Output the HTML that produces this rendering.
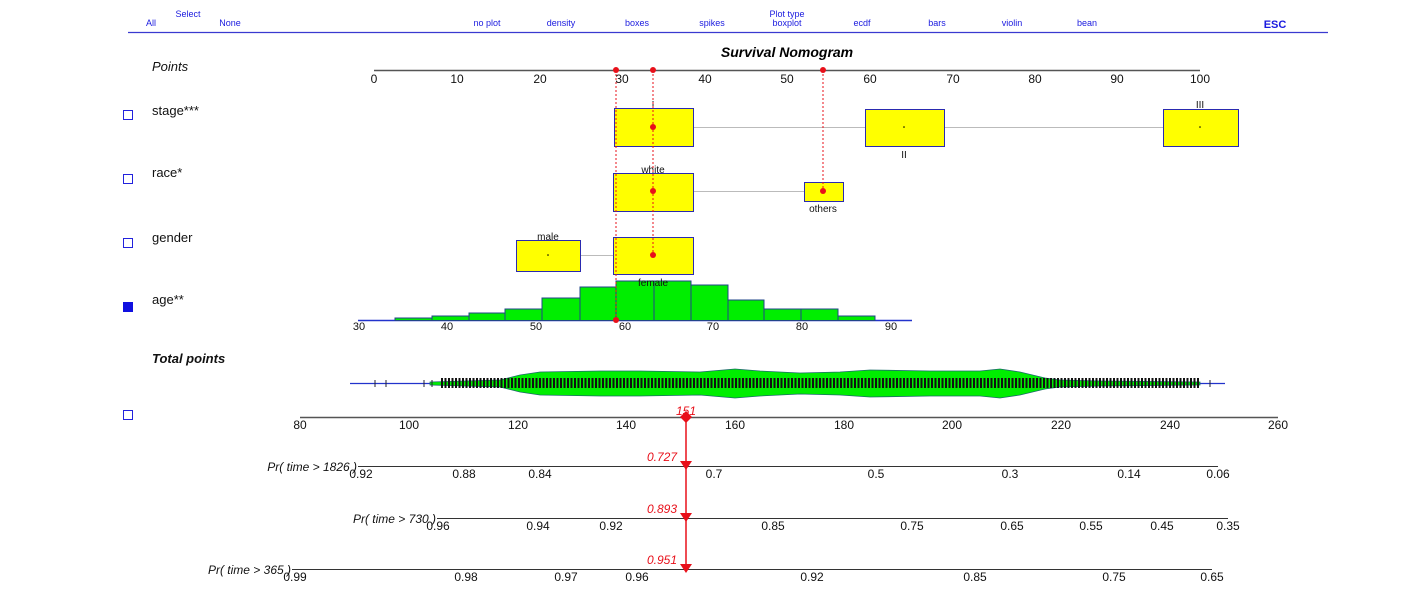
<!DOCTYPE html>
<html><head><meta charset="utf-8"><style>
html,body{margin:0;padding:0;background:#fff;}
svg{display:block;font-family:"Liberation Sans",Arial,sans-serif;}
.m{fill:#1a1adf;font-size:9px;text-anchor:middle}
.l{font-size:13px;fill:#111}
.t{font-size:12px;fill:#111;text-anchor:middle}
.r{fill:#e8101a;font-size:12px;font-style:italic;text-anchor:middle}
.bx{fill:#ffff00;stroke:#2a2ab0;stroke-width:1}
.hb{fill:#00ee00;stroke:#224488;stroke-width:1}
.rd{stroke:#e8101a;stroke-width:1;stroke-dasharray:2,2}
</style></head><body>
<svg width="1410" height="600" viewBox="0 0 1410 600" xmlns="http://www.w3.org/2000/svg">
<defs>
<pattern id="tk" x="0" y="0" width="3.5" height="20" patternUnits="userSpaceOnUse"><rect x="0" y="0" width="2" height="20" fill="#111"/></pattern>
</defs>
<text class="m" x="188" y="17">Select</text>
<text class="m" x="151" y="26">All</text>
<text class="m" x="230" y="26">None</text>
<text class="m" x="487" y="26">no plot</text>
<text class="m" x="561" y="26">density</text>
<text class="m" x="637" y="26">boxes</text>
<text class="m" x="712" y="26">spikes</text>
<text class="m" x="787" y="17">Plot type</text>
<text class="m" x="787" y="26">boxplot</text>
<text class="m" x="862" y="26">ecdf</text>
<text class="m" x="937" y="26">bars</text>
<text class="m" x="1012" y="26">violin</text>
<text class="m" x="1087" y="26">bean</text>
<text class="m" x="1275" y="28" style="font-size:11px;font-weight:bold">ESC</text>
<line x1="128" y1="32.5" x2="1328" y2="32.5" stroke="#3a3ad0" stroke-width="1.2"/>
<text x="787" y="57" style="font-size:14px;font-weight:bold;font-style:italic;text-anchor:middle">Survival Nomogram</text>
<text class="l" x="152" y="71" style="font-style:italic">Points</text>
<line x1="374" y1="70.5" x2="1200" y2="70.5" stroke="#555" stroke-width="1.5"/>
<g class="t">
<text x="374" y="83">0</text><text x="457" y="83">10</text><text x="540" y="83">20</text><text x="622" y="83">30</text><text x="705" y="83">40</text><text x="787" y="83">50</text><text x="870" y="83">60</text><text x="953" y="83">70</text><text x="1035" y="83">80</text><text x="1117" y="83">90</text><text x="1200" y="83">100</text>
</g>
<rect x="123.5" y="110.5" width="9" height="9" fill="none" stroke="#2222dd"/>
<rect x="123.5" y="174.5" width="9" height="9" fill="none" stroke="#2222dd"/>
<rect x="123.5" y="238.5" width="9" height="9" fill="none" stroke="#2222dd"/>
<rect x="123" y="302" width="10" height="10" fill="#1010e0"/>
<rect x="123.5" y="410.5" width="9" height="9" fill="none" stroke="#2222dd"/>
<text class="l" x="152" y="115">stage***</text>
<text class="l" x="152" y="177">race*</text>
<text class="l" x="152" y="242">gender</text>
<text class="l" x="152" y="304">age**</text>
<line x1="693" y1="127.5" x2="1163" y2="127.5" stroke="#bbb"/>
<rect class="bx" x="614.5" y="108.5" width="79" height="38"/>
<rect class="bx" x="865.5" y="109.5" width="79" height="37"/>
<rect class="bx" x="1163.5" y="109.5" width="75" height="37"/>
<circle cx="904" cy="127" r="0.8" fill="#000"/><circle cx="1200" cy="127" r="0.8" fill="#000"/>
<text class="t" x="653" y="108" style="font-size:10px">I</text>
<text class="t" x="904" y="158" style="font-size:10px">II</text>
<text class="t" x="1200" y="108" style="font-size:10px">III</text>
<line x1="693" y1="191.5" x2="804" y2="191.5" stroke="#bbb"/>
<rect class="bx" x="613.5" y="173.5" width="80" height="38"/>
<rect class="bx" x="804.5" y="182.5" width="39" height="19"/>
<text class="t" x="653" y="173" style="font-size:10px">white</text>
<text class="t" x="823" y="212" style="font-size:10px">others</text>
<line x1="580" y1="255.5" x2="613" y2="255.5" stroke="#bbb"/>
<rect class="bx" x="516.5" y="240.5" width="64" height="31"/>
<rect class="bx" x="613.5" y="237.5" width="80" height="37"/>
<circle cx="548" cy="255" r="0.8" fill="#000"/>
<text class="t" x="548" y="240" style="font-size:10px">male</text>
<line x1="358" y1="320.5" x2="912" y2="320.5" stroke="#2233cc" stroke-width="1.5"/>
<g class="hb">
<rect x="395" y="318" width="37" height="2.5"/>
<rect x="432" y="316" width="37" height="4.5"/>
<rect x="469" y="313" width="36" height="7.5"/>
<rect x="505" y="309" width="37" height="11.5"/>
<rect x="542" y="298" width="38" height="22.5"/>
<rect x="580" y="287" width="36" height="33.5"/>
<rect x="616" y="281" width="38" height="39.5"/>
<rect x="654" y="281" width="37" height="39.5"/>
<rect x="691" y="285" width="37" height="35.5"/>
<rect x="728" y="300" width="36" height="20.5"/>
<rect x="764" y="309" width="37" height="11.5"/>
<rect x="801" y="309" width="37" height="11.5"/>
<rect x="838" y="316" width="37" height="4.5"/>
</g>
<text class="t" x="653" y="286" style="font-size:10px">female</text>
<g class="t" style="font-size:11px">
<text x="359" y="330">30</text><text x="447" y="330">40</text><text x="536" y="330">50</text><text x="625" y="330">60</text><text x="713" y="330">70</text><text x="802" y="330">80</text><text x="891" y="330">90</text>
</g>
<line class="rd" x1="616" y1="70" x2="616" y2="320"/>
<line class="rd" x1="653" y1="70" x2="653" y2="256"/>
<line class="rd" x1="823" y1="70" x2="823" y2="191"/>
<g fill="#e8101a">
<circle cx="616" cy="70" r="3"/><circle cx="653" cy="70" r="3"/><circle cx="823" cy="70" r="3"/>
<circle cx="653" cy="127" r="3"/><circle cx="653" cy="191" r="3"/><circle cx="653" cy="255" r="3"/>
<circle cx="823" cy="191" r="3"/><circle cx="616" cy="320" r="3"/>
</g>
<text class="l" x="152" y="363" style="font-weight:bold;font-style:italic">Total points</text>
<line x1="350" y1="383.5" x2="1225" y2="383.5" stroke="#2233cc" stroke-width="1.2"/>
<path d="M430,382 L500,380 520,375 540,372 600,371 640,371 700,372 735,369 760,371 800,373 840,372 870,370 930,371 980,371 1000,369 1020,372 1045,378 1060,380 1100,381 1200,382 L1200,385 1100,386 1060,387 1045,389 1020,395 1000,398 980,396 930,396 870,397 840,395 800,394 760,396 735,398 700,395 640,396 600,396 540,395 520,392 500,387 430,385Z" fill="#00ee00" stroke="#1b6a6a" stroke-width="0.8"/>
<rect x="440" y="378" width="760" height="10" fill="url(#tk)"/>
<g stroke="#223" stroke-width="1">
<line x1="375" y1="380" x2="375" y2="387"/><line x1="386" y1="380" x2="386" y2="387"/><line x1="424" y1="380" x2="424" y2="387"/><line x1="432" y1="380" x2="432" y2="387"/>
<line x1="1210" y1="380" x2="1210" y2="387"/><line x1="1188" y1="380" x2="1188" y2="387"/>
</g>
<line x1="300" y1="417.5" x2="1278" y2="417.5" stroke="#555" stroke-width="1.5"/>
<g class="t">
<text x="300" y="429">80</text><text x="409" y="429">100</text><text x="518" y="429">120</text><text x="626" y="429">140</text><text x="735" y="429">160</text><text x="844" y="429">180</text><text x="952" y="429">200</text><text x="1061" y="429">220</text><text x="1170" y="429">240</text><text x="1278" y="429">260</text>
</g>
<text class="r" x="686" y="415">151</text>
<line x1="686" y1="417" x2="686" y2="570" stroke="#e8101a" stroke-width="1.5"/>
<path d="M686,411 L692,417 686,423 680,417Z" fill="#e8101a"/>
<g style="font-size:12px;font-style:italic;text-anchor:end;fill:#111">
<text x="357" y="471">Pr( time &gt; 1826 )</text>
<text x="436" y="523">Pr( time &gt; 730 )</text>
<text x="291" y="574">Pr( time &gt; 365 )</text>
</g>
<line x1="358" y1="466.5" x2="1218" y2="466.5" stroke="#333"/>
<line x1="437" y1="518.5" x2="1228" y2="518.5" stroke="#333"/>
<line x1="292" y1="569.5" x2="1212" y2="569.5" stroke="#333"/>
<g class="t">
<text x="361" y="478">0.92</text><text x="464" y="478">0.88</text><text x="540" y="478">0.84</text><text x="714" y="478">0.7</text><text x="876" y="478">0.5</text><text x="1010" y="478">0.3</text><text x="1129" y="478">0.14</text><text x="1218" y="478">0.06</text>
<text x="438" y="530">0.96</text><text x="538" y="530">0.94</text><text x="611" y="530">0.92</text><text x="773" y="530">0.85</text><text x="912" y="530">0.75</text><text x="1012" y="530">0.65</text><text x="1091" y="530">0.55</text><text x="1162" y="530">0.45</text><text x="1228" y="530">0.35</text>
<text x="295" y="581">0.99</text><text x="466" y="581">0.98</text><text x="566" y="581">0.97</text><text x="637" y="581">0.96</text><text x="812" y="581">0.92</text><text x="975" y="581">0.85</text><text x="1114" y="581">0.75</text><text x="1212" y="581">0.65</text>
</g>
<text class="r" x="662" y="461">0.727</text>
<text class="r" x="662" y="513">0.893</text>
<text class="r" x="662" y="564">0.951</text>
<g fill="#e8101a">
<path d="M680,461 L692,461 686,470Z"/><path d="M680,513 L692,513 686,522Z"/><path d="M680,564 L692,564 686,573Z"/>
</g>
</svg>
</body></html>
